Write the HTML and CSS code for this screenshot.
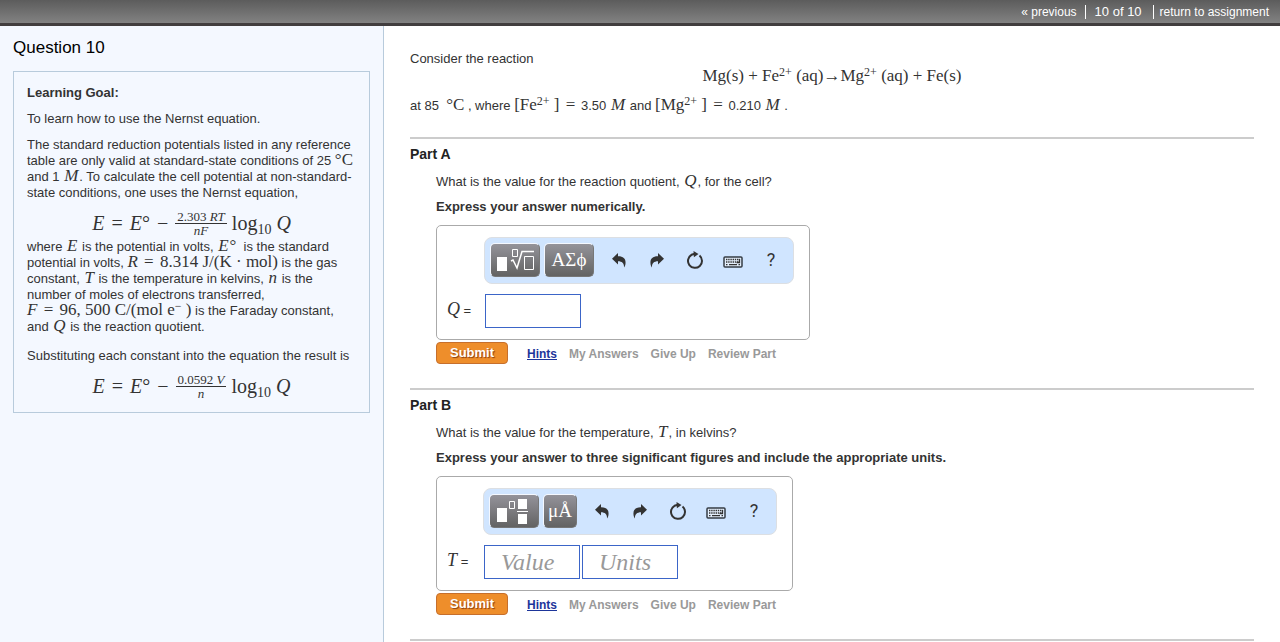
FILE: index.html
```
<!DOCTYPE html>
<html lang="en">
<head>
<meta charset="utf-8">
<meta name="viewport" content="width=device-width, initial-scale=1">
<title>Question 10</title>
<link rel="stylesheet" href="styles.css">
</head>
<body>
<svg class="sprite" aria-hidden="true">
  <symbol id="undo" viewBox="0 0 14 15"><path d="M6 0v3.3C11.500 3.200 14 6 13.500 10.500c-.1 1.800-.7 3.100-1.500 4C12.300 10.700 10.400 8.200 6 8.200v3.300L0 5.800z"/></symbol>
  <symbol id="redo" viewBox="0 0 14 15"><path d="M8 0v3.300C2.500 3.200 0 6 .5 10.500c.1 1.800.7 3.100 1.500 4C1.700 10.700 3.600 8.200 8 8.200v3.300l6-5.700z"/></symbol>
  <symbol id="reset" viewBox="0 0 18 18"><path d="M13.500 4.500a7 7 0 1 1-8-.7l3.500-1" fill="none" stroke="#333" stroke-width="2"/><path d="M7.500 0l5 3-4.600 3.200z"/></symbol>
  <symbol id="keyboard" viewBox="0 0 20 12"><rect x="1" y="1" width="18" height="10" rx="1" fill="#e4effc" stroke="#353c44" stroke-width="1.500"/><path d="M3 3.500h14M3 6h12.500" fill="none" stroke="#333" stroke-width="1.300" stroke-dasharray="1.400 .8"/><path d="M16.500 3v3.500h-3M3 8.700h1.500m1.500 0h8m1.500 0H17" fill="none" stroke="#333" stroke-width="1.300"/></symbol>
</svg>

<header class="topbar">
  <nav class="pager" aria-label="Assignment">
    <a href="#previous">« previous</a>
    <span class="count">10 of 10</span>
    <a href="#assignment">return to assignment</a>
  </nav>
</header>

<div class="layout">
  <aside class="sidebar">
    <h1>Question 10</h1>
    <section class="goal">
      <h2>Learning Goal:</h2>
      <p>To learn how to use the Nernst equation.</p>
      <p>The standard reduction potentials listed in any reference<br>table are only valid at standard-state conditions of 25 <span class="m">°C</span><br>and 1 <i class="m">M</i>. To calculate the cell potential at non-standard-<br>state conditions, one uses the Nernst equation,</p>
      <div class="equation">
        <span><i>E</i> <span class="op">=</span> <i>E</i>° <span class="op">−</span></span>
        <span class="frac"><span>2.303 <i>RT</i></span><i>nF</i></span>
        <span>log<sub>10</sub> <i>Q</i></span>
      </div>
      <p class="where">where <i class="m">E</i> is the potential in volts, <i class="m">E</i><span class="m">°</span>&nbsp; is the standard<br>potential in volts, <span class="m"><i>R</i> <span class="op">=</span> 8.314 J/(K · mol)</span> is the gas<br>constant, <i class="m">T</i> is the temperature in kelvins, <i class="m">n</i> is the<br>number of moles of electrons transferred,<br><span class="m"><i>F</i> <span class="op">=</span> 96, 500 C/(mol e<sup>−</sup> )</span> is the Faraday constant,<br>and <i class="m">Q</i> is the reaction quotient.</p>
      <p>Substituting each constant into the equation the result is</p>
      <div class="equation">
        <span><i>E</i> <span class="op">=</span> <i>E</i>° <span class="op">−</span></span>
        <span class="frac"><span>0.0592 <i>V</i></span><i>n</i></span>
        <span>log<sub>10</sub> <i>Q</i></span>
      </div>
    </section>
  </aside>

  <main class="content">
    <div class="intro">
      <p>Consider the reaction</p>
      <p class="reaction">Mg(s) + Fe<sup>2+</sup> (aq)→Mg<sup>2+</sup> (aq) + Fe(s)</p>
      <p>at 85 &nbsp;<span class="m">°C</span> , where <span class="m">[Fe<sup>2+</sup> ] <span class="op">=</span></span> 3.50 <i class="m">M</i> and <span class="m">[Mg<sup>2+</sup> ] <span class="op">=</span></span> 0.210 <i class="m">M</i> .</p>
    </div>

    <section class="part">
      <h2>Part A</h2>
      <div class="part-body">
        <p>What is the value for the reaction quotient, <i class="m">Q</i>, for the cell?</p>
        <p class="instruction">Express your answer numerically.</p>
        <div class="answer">
          <div class="toolbar">
            <button class="key" type="button" aria-label="Templates"><svg width="40" height="24" viewBox="0 0 40 24"><path d="M2 9h10v14H2z" fill="#fff"/><path d="M17.500 1.500h5v7h-5zM29.500 8.500h9v13h-9z" fill="none" stroke="#fff"/><path d="M16 13l2-1 4 8 5-16.500h12" fill="none" stroke="#fff" stroke-width="1.500"/></svg></button>
            <button class="key" type="button">ΑΣϕ</button>
            <div class="tools">
              <button type="button" aria-label="Undo"><svg width="14" height="15"><use href="#undo"/></svg></button>
              <button type="button" aria-label="Redo"><svg width="14" height="15"><use href="#redo"/></svg></button>
              <button type="button" aria-label="Reset"><svg width="18" height="18"><use href="#reset"/></svg></button>
              <button class="low" type="button" aria-label="Keyboard"><svg width="20" height="12"><use href="#keyboard"/></svg></button>
              <button type="button">?</button>
            </div>
          </div>
          <label for="q"><i>Q</i> =</label>
          <div class="fields"><input id="q" type="text"></div>
        </div>
        <div class="actions">
          <button class="submit" type="button">Submit</button>
          <a class="hints" href="#hints-a">Hints</a>
          <a href="#answers-a">My Answers</a>
          <a href="#giveup-a">Give Up</a>
          <a href="#review-a">Review Part</a>
        </div>
      </div>
    </section>

    <section class="part">
      <h2>Part B</h2>
      <div class="part-body">
        <p>What is the value for the temperature, <i class="m">T</i>, in kelvins?</p>
        <p class="instruction">Express your answer to three significant figures and include the appropriate units.</p>
        <div class="answer units">
          <div class="toolbar">
            <button class="key" type="button" aria-label="Templates"><svg width="36" height="26" viewBox="0 0 36 26"><path d="M1 10h10v14H1zM22 1h9v10h-9zM22 16h9v10h-9zM21 13h11v1H21z" fill="#fff"/><path d="M13.500 3.500h5v7h-5z" fill="none" stroke="#fff"/></svg></button>
            <button class="key small" type="button">μÅ</button>
            <div class="tools">
              <button type="button" aria-label="Undo"><svg width="14" height="15"><use href="#undo"/></svg></button>
              <button type="button" aria-label="Redo"><svg width="14" height="15"><use href="#redo"/></svg></button>
              <button type="button" aria-label="Reset"><svg width="18" height="18"><use href="#reset"/></svg></button>
              <button class="low" type="button" aria-label="Keyboard"><svg width="20" height="12"><use href="#keyboard"/></svg></button>
              <button type="button">?</button>
            </div>
          </div>
          <label for="t"><i>T</i> =</label>
          <div class="fields">
            <input id="t" type="text" placeholder="Value">
            <input type="text" placeholder="Units" aria-label="Units">
          </div>
        </div>
        <div class="actions">
          <button class="submit" type="button">Submit</button>
          <a class="hints" href="#hints-b">Hints</a>
          <a href="#answers-b">My Answers</a>
          <a href="#giveup-b">Give Up</a>
          <a href="#review-b">Review Part</a>
        </div>
      </div>
    </section>
    <hr>
  </main>
</div>
</body>
</html>
```
FILE: styles.css
```
* { box-sizing: border-box; }
body {
  margin: 0;
  min-height: 100vh;
  display: flex;
  flex-direction: column;
  background: #fff;
  color: #333;
  font: 13px/16px "Liberation Sans", Arial, sans-serif;
}
h1, h2, p { margin: 0; }
button, input { font: inherit; }
.sprite { display: none; }

.topbar {
  height: 26px;
  padding-right: 11px;
  display: flex;
  justify-content: flex-end;
  background: linear-gradient(#5c5c5c, #828282);
  border-bottom: 3px solid #413d3e;
}
.pager { display: flex; align-items: center; font-size: 12px; }
.pager a, .pager span { color: #fff; text-decoration: none; line-height: 14px; }
.pager .count {
  margin: 0 6px 0 8px;
  padding: 0 11px 0 9px;
  border: solid #fff;
  border-width: 0 1px;
  font-size: 13px;
}

.layout { flex: 1; display: grid; grid-template-columns: 30% 1fr; }
.sidebar {
  padding: 12px 13px;
  background: #f4f8ff;
  border-right: 1px solid #b8cbdc;
}
.sidebar h1 { font-size: 17px; line-height: 20px; font-weight: 400; color: #000; }
.goal {
  margin-top: 13px;
  padding: 13px 13px 12px;
  border: 1px solid #b8cbdc;
  white-space: nowrap;
}
.goal h2 { font-size: 13px; line-height: 16px; }
.goal p { margin-top: 10px; }
.goal .where { margin: 2px 0 13px; }

.m, .reaction, .equation, .answer i {
  font-family: "Liberation Serif", "Times New Roman", serif;
}
.m { font-size: 17px; line-height: 0; }
i.m { padding: 0 1px; }
.op { padding: 0 2px; }
sup, sub { font-size: 12px; line-height: 0; }
sup { vertical-align: 5px; }
.equation {
  margin-top: 8px;
  height: 28px;
  display: flex;
  justify-content: center;
  align-items: center;
  gap: 5px;
  font-size: 20px;
  line-height: 24px;
}
.equation sub { font-size: 14px; vertical-align: -4px; }
.frac { display: grid; justify-items: center; font-size: 13px; line-height: 13px; }
.frac > span { padding: 0 2px; border-bottom: 1px solid #333; }

.content { padding: 25px 26px 0; min-width: 0; }
.intro { padding-bottom: 23px; }
.reaction { text-align: center; font-size: 17px; line-height: 18px; }
.reaction + p { margin-top: 13px; }
.part { padding: 7px 0 24px; border-top: 2px solid #ccc; }
.part h2 { font-size: 14px; line-height: 16px; color: #222; }
.part-body { padding: 12px 0 0 26px; }
.instruction { margin: 9px 0 10px; font-weight: 700; }
hr { margin: 0; border: 0; border-top: 2px solid #ccc; }

.answer {
  width: fit-content;
  display: grid;
  grid-template-columns: 37px auto;
  row-gap: 10px;
  padding: 11px 15px 11px 10px;
  border: 1px solid #aaa;
  border-radius: 5px;
}
.answer.units { grid-template-columns: 36px auto; }
.toolbar {
  grid-column: 2;
  height: 47px;
  padding: 5px 3px 0 5px;
  display: flex;
  align-items: flex-start;
  gap: 4px;
  background: #d0e5ff;
  border: 1px solid #dcdfe3;
  border-radius: 8px;
}
.key {
  width: 50px;
  height: 34px;
  padding: 0;
  display: flex;
  align-items: center;
  justify-content: center;
  border: 1px solid #777;
  border-top-color: #f4f8ff;
  border-left-color: #f4f8ff;
  border-radius: 5px;
  background: linear-gradient(#94939a, #636363);
  color: #fff;
  font: 19px/30px "Liberation Serif", serif;
}
.key.small { width: 34px; }
.tools { display: flex; margin-left: 2px; }
.tools button {
  width: 38px;
  height: 34px;
  padding: 0;
  display: flex;
  align-items: center;
  justify-content: center;
  border: 0;
  background: none;
  color: #333;
  font: 18px/34px Roboto, sans-serif;
}
.tools .low { padding-top: 4px; }
.tools svg { fill: #333; }
.answer label { align-self: center; padding-bottom: 3px; }
.answer label i { font-size: 18px; line-height: 18px; }
.fields { display: flex; gap: 2px; padding-left: 1px; }
.fields input {
  width: 96px;
  height: 34px;
  padding: 0 16px;
  border: 1px solid #3b65c8;
  border-radius: 0;
  background: #fff;
  font: italic 24px/30px "Liberation Serif", serif;
}
.fields input::placeholder { color: #999; opacity: 1; }
.actions {
  display: flex;
  align-items: center;
  gap: 12px;
  margin-top: 2px;
  font-size: 12px;
  font-weight: 700;
}
.actions a { padding-top: 2px; color: #999; text-decoration: none; }
.actions .hints { margin-left: 7px; color: #1d359a; text-decoration: underline; }
.submit {
  width: 72px;
  height: 22px;
  padding: 0;
  border: 1px solid #c66f2c;
  border-radius: 4px;
  background: #ee8e2b;
  color: #fff;
  font-size: 13px;
  text-shadow: 1px 1px 1px #8a3c10;
}
```
